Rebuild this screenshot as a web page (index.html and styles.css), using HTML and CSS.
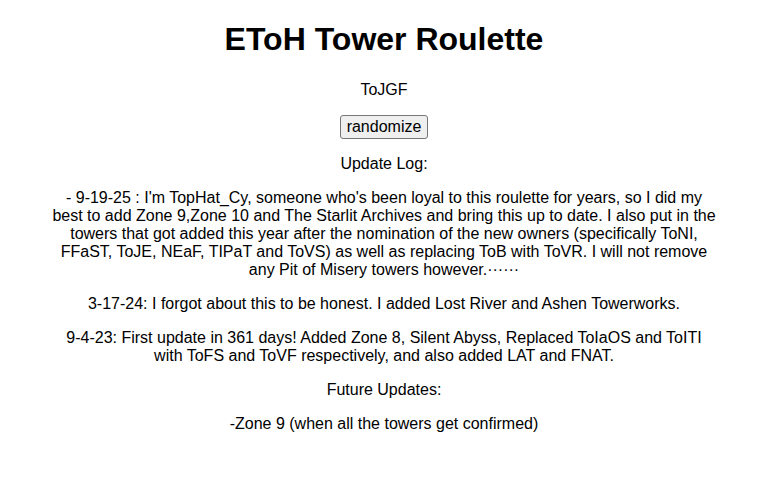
FILE: index.html
```html
<!DOCTYPE html>
<html>
<head>
<meta charset="utf-8">
<link rel="stylesheet" href="styles.css">
</head>
<body>
<h1 class="title">EToH Tower Roulette</h1>
<p class="result">ToJGF</p>
<div class="controls"><button class="btn">randomize</button></div>
<p class="text">Update Log:</p>
<p class="text">- 9-19-25 : I'm TopHat_Cy, someone who's been loyal to this roulette for years, so I did my best to add Zone 9,Zone 10 and The Starlit Archives and bring this up to date. I also put in the towers that got added this year after the nomination of the new owners (specifically ToNI, FFaST, ToJE, NEaF, TIPaT and ToVS) as well as replacing ToB with ToVR. I will not remove any Pit of Misery towers however.······</p>
<p class="text">3-17-24: I forgot about this to be honest. I added Lost River and Ashen Towerworks.</p>
<p class="text">9-4-23: First update in 361 days! Added Zone 8, Silent Abyss, Replaced ToIaOS and ToITI with ToFS and ToVF respectively, and also added LAT and FNAT.</p>
<p class="text">Future Updates:</p>
<p class="text">-Zone 9 (when all the towers get confirmed)</p>
</body>
</html>
```
FILE: styles.css
```css
body {
  margin: 0 8px 8px;
  font-family: "Liberation Sans", Arial, sans-serif;
  font-size: 16px;
  color: #000;
  background: #fff;
  text-align: center;
}
.title {
  font-size: 32px;
  font-weight: bold;
  margin: 21.44px 0 22.44px;
}
.result, .text {
  margin: 16px auto;
  max-width: 668px;
}
.controls {
  margin: 16px 0;
}
.btn {
  font-family: "Liberation Sans", Arial, sans-serif;
  font-size: 16px;
  padding: 2px 6px;
  border: 1px solid #767676;
  border-radius: 3px;
  background: #efefef;
  color: #000;
}
```
